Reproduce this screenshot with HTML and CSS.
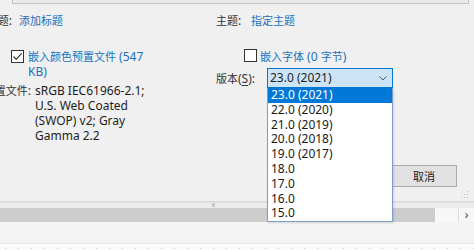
FILE: index.html
```html
<!DOCTYPE html>
<html>
<head>
<meta charset="utf-8">
<link rel="stylesheet" href="styles.css">
</head>
<body>
<div class="page">
  <div class="topbox"></div>
  <div class="dialog">
    <div class="col left">
      <div class="row r1">
        <div class="lab lab1"><span><span class="cn">标题</span>:</span></div>
        <a class="link cn">添加标题</a>
      </div>
      <div class="check c-left">
        <span class="box on"><svg width="11" height="11" viewBox="0 0 11 11"><path d="M1.5 5.5 L4.2 8.3 L9.6 2.4" fill="none" stroke="#222" stroke-width="1.1"/></svg></span>
        <span class="ctext"><span class="cn">嵌入颜色预置文件</span> (547 KB)</span>
      </div>
      <div class="row r3">
        <div class="lab lab3"><span><span class="cn">颜色配置文件</span>:</span></div>
        <div class="val">sRGB IEC61966-2.1; U.S. Web Coated (SWOP) v2; Gray Gamma 2.2</div>
      </div>
    </div>
    <div class="col right">
      <div class="row r1">
        <div class="lab lab2"><span class="cn">主题</span>:</div>
        <a class="link cn">指定主题</a>
      </div>
      <div class="check c-right">
        <span class="box"></span>
        <span class="ctext"><span class="cn">嵌入字体</span> (0 <span class="cn">字节</span>)</span>
      </div>
      <div class="row ver">
        <div class="lab lab4"><span class="cn">版本</span>(<u>S</u>):</div>
        <div class="select">
          <span class="sel-text">23.0 (2021)</span>
          <svg class="chev" width="8" height="5" viewBox="0 0 8 5"><path d="M0.5 0.5 L4 4 L7.5 0.5" fill="none" stroke="#555" stroke-width="1"/></svg>
          <ul class="list">
            <li class="hl">23.0 (2021)</li>
            <li>22.0 (2020)</li>
            <li>21.0 (2019)</li>
            <li>20.0 (2018)</li>
            <li>19.0 (2017)</li>
            <li>18.0</li>
            <li>17.0</li>
            <li>16.0</li>
            <li>15.0</li>
          </ul>
        </div>
      </div>
      <div class="btnrow">
        <div class="btn cn">取消</div>
      </div>
    </div>
    <svg class="grip" width="8" height="8" viewBox="0 0 8 8">
      <rect x="6" y="0" width="1" height="1" fill="#bbb"/>
      <rect x="3" y="3" width="1" height="1" fill="#bbb"/>
      <rect x="6" y="3" width="1" height="1" fill="#bbb"/>
      <rect x="0" y="6" width="1" height="1" fill="#bbb"/>
      <rect x="3" y="6" width="1" height="1" fill="#bbb"/>
      <rect x="6" y="6" width="1" height="1" fill="#bbb"/>
    </svg>
  </div>
  <div class="gap"><span class="tick"></span></div>
  <div class="hscroll">
    <div class="track"></div>
    <div class="blank"></div>
    <div class="arrow">›</div>
  </div>
  <div class="pane"></div>
  <div class="lastrow"></div>
</div>
</body>
</html>
```
FILE: styles.css
```css
* { box-sizing: border-box; }
html, body { margin: 0; padding: 0; }
body {
  width: 474px;
  height: 250px;
  overflow: hidden;
  background: #f0f0f0;
  font-family: "Noto Sans", "Noto Sans CJK SC", sans-serif;
  font-size: 12px;
  color: #1e1e1e;
}
.cn { font-family: "Noto Sans CJK SC", sans-serif; font-size: 11px; }
.page { width: 474px; height: 250px; display: flex; flex-direction: column; }
.topbox {
  margin-left: 12px;
  width: 457px;
  height: 4px;
  background: #e9e9e9;
  border: 1px solid #c4c4c4;
  border-top: none;
  flex: none;
}
.dialog {
  position: relative;
  height: 197px;
  flex: none;
  display: grid;
  grid-template-columns: 216px 1fr;
  background: #f0f0f0;
}
.col { display: flex; flex-direction: column; }
.row { display: flex; line-height: 15px; }
.r1 { margin-top: 9px; height: 15px; }
.lab { white-space: nowrap; color: #333; }
.lab1 { width: 12px; overflow: hidden; display: flex; justify-content: flex-end; margin-right: 7px; }
.lab3 { width: 31px; overflow: hidden; display: flex; justify-content: flex-end; margin-right: 4px; }
.lab2 { width: 35px; }
.link { color: #2070c0; }
.check { display: flex; align-items: flex-start; line-height: 15px; }
.box {
  width: 13px; height: 13px;
  border: 1px solid #333;
  background: #fff;
  flex: none;
  display: flex; align-items: center; justify-content: center;
}
.ctext { color: #2070c0; }
.c-left { margin-top: 21px; padding-left: 11px; }
.c-left .box { margin-top: 1px; margin-right: 4px; }
.c-left .ctext { width: 122px; }
.r3 { margin-top: 4px; }
.val { width: 116px; color: #1e1e1e; }
.c-right { margin-top: 21px; padding-left: 28px; }
.c-right .box { margin-top: 0px; margin-right: 3px; }
.ver { margin-top: 4px; align-items: center; height: 20px; }
.lab4 { width: 51px; }
.lab4 u { text-underline-offset: 2px; }
.select {
  position: relative;
  width: 126px;
  height: 20px;
  border: 1px solid #0078d7;
  background: #cce4f7;
  display: flex;
  align-items: center;
  padding-left: 2px;
  line-height: 18px;
}
.sel-text { flex: 1; }
.chev { margin-right: 5px; }
.list {
  position: absolute;
  left: -1px;
  top: 19px;
  width: 126px;
  margin: 0;
  padding: 0;
  list-style: none;
  background: #fff;
  border: 1px solid #7a9ecb;
  border-top: none;
  box-shadow: 1px 1px 2px rgba(0,0,0,0.12);
  z-index: 2;
}
.list li { height: 14.8px; line-height: 14.8px; padding-left: 3px; color: #1a1a1a; }
.list li.hl { background: #0078d7; color: #fff; }
.btnrow { display: flex; justify-content: flex-end; margin-top: 77px; padding-right: 17px; }
.btn {
  width: 66px; height: 22px;
  background: #e1e1e1;
  border: 1px solid #adadad;
  display: flex; align-items: center; justify-content: center;
  color: #222;
}
.grip { position: absolute; right: 5px; bottom: 2px; }
.gap {
  height: 7px; flex: none;
  background: #ececec;
  border-top: 1px solid #d9d9d9;
  box-shadow: inset 0 1px 1px rgba(0,0,0,0.05);
  position: relative;
}
.tick { position: absolute; left: 212px; top: 1px; width: 3px; height: 4px; background: #c8c8c8; }
.hscroll { height: 14px; flex: none; display: flex; }
.track { width: 435px; background: #cdcdcd; }
.blank { width: 24px; background: #f7f7f7; border-right: 1px solid #e0e0e0; }
.arrow { flex: 1; background: #f7f7f7; color: #444; font-size: 12px; line-height: 14px; text-align: center; }
.pane { height: 21px; flex: none; background: #f3f3f3; }
.lastrow {
  flex: 1;
  background: #fbfbfb;
  border-top: 1px solid #e8e8e8;
  background-image: repeating-linear-gradient(90deg, transparent 0 5px, #cfcfcf 5px 6px, transparent 6px 13px);
  background-size: 100% 1px;
  background-repeat: no-repeat;
  background-position: 0 4px;
}
```
